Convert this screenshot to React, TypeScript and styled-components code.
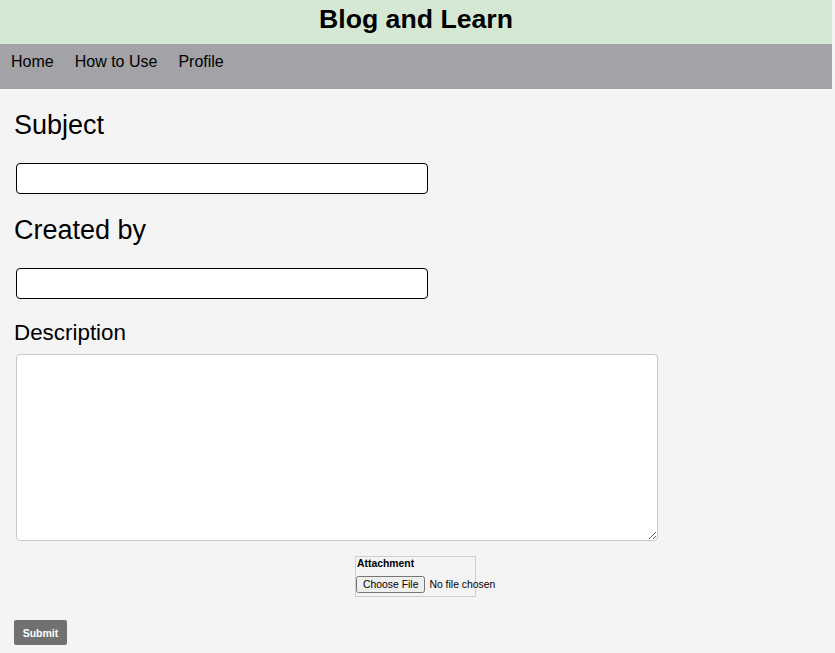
import React from "react";
import styled, { createGlobalStyle } from "styled-components";

const Global = createGlobalStyle`
  html, body {
    margin: 0;
    padding: 0;
    background: #f4f4f4;
    font-family: "Liberation Sans", Arial, sans-serif;
    color: #000;
  }
  * { box-sizing: border-box; }
`;

const Page = styled.div`
  width: 832px;
`;

const Header = styled.header`
  height: 44px;
  background: #d5e8d4;
  text-align: center;
`;

const Title = styled.h1`
  margin: 0;
  font-size: 26.67px;
  font-weight: bold;
  line-height: 38px;
`;

const Nav = styled.nav`
  height: 45px;
  background: #a3a2a6;
  display: flex;
  align-items: flex-start;
  gap: 21px;
  padding: 8px 0 0 11px;
`;

const NavLink = styled.a`
  font-size: 16px;
  line-height: 19px;
  color: #000;
  text-decoration: none;
  cursor: pointer;
`;

const Form = styled.form`
  display: flex;
  flex-direction: column;
  align-items: flex-start;
  padding: 20px 0 0 14px;
`;

const Label = styled.label<{ $size: number; $lh: number; $top?: number; $bottom: number }>`
  display: block;
  font-size: ${(p) => p.$size}px;
  line-height: ${(p) => p.$lh}px;
  margin: ${(p) => p.$top ?? 0}px 0 ${(p) => p.$bottom}px 0;
`;

const TextInput = styled.input`
  display: block;
  width: 412px;
  height: 31px;
  margin: 0 0 19px 2px;
  border: 1px solid #000;
  border-radius: 4px;
  background: #fff;
  font-family: "Liberation Sans", Arial, sans-serif;
  font-size: 14px;
  padding: 0 6px;
`;

const TextArea = styled.textarea`
  display: block;
  width: 642px;
  height: 187px;
  margin: 0 0 15px 2px;
  border: 1px solid #c8c8c8;
  border-radius: 4px;
  background: #fff;
  font-family: "Liberation Sans", Arial, sans-serif;
  font-size: 14px;
`;

const AttachRow = styled.div`
  width: 831px;
  display: flex;
  justify-content: center;
  margin-left: -14px;
`;

const AttachBox = styled.div`
  width: 121px;
  height: 41px;
  border: 1px solid #cfcfcf;
  padding: 1px 0 0 0;
  display: flex;
  flex-direction: column;
  gap: 6px;
  overflow: visible;
  font-size: 10.4px;
`;

const AttachLabel = styled.span`
  font-weight: bold;
  line-height: 12px;
  padding-left: 1px;
`;

const FileInput = styled.input`
  font-family: "Liberation Sans", Arial, sans-serif;
  font-size: 10.4px;
  white-space: nowrap;
  width: 170px;
  margin: 0;

  &::file-selector-button {
    font-family: "Liberation Sans", Arial, sans-serif;
    font-size: 10.4px;
    padding: 1px 5px;
    margin: 0 4px 0 0;
  }
`;

const SubmitButton = styled.button`
  margin-top: 23px;
  width: 53px;
  height: 25px;
  background: #717171;
  color: #fff;
  border: none;
  border-radius: 2px;
  font-family: "Liberation Sans", Arial, sans-serif;
  font-weight: bold;
  font-size: 10.5px;
  padding: 0;
  cursor: pointer;
`;

export default function App() {
  return (
    <Page>
      <Global />
      <Header>
        <Title>Blog and Learn</Title>
      </Header>
      <Nav>
        <NavLink>Home</NavLink>
        <NavLink>How to Use</NavLink>
        <NavLink>Profile</NavLink>
      </Nav>
      <Form onSubmit={(e) => e.preventDefault()}>
        <Label $size={27} $lh={32} $bottom={22}>Subject</Label>
        <TextInput type="text" />
        <Label $size={27} $lh={32} $top={1} $bottom={22}>Created by</Label>
        <TextInput type="text" />
        <Label $size={22.4} $lh={26} $top={2} $bottom={8}>Description</Label>
        <TextArea />
        <AttachRow>
          <AttachBox>
            <AttachLabel>Attachment</AttachLabel>
            <FileInput type="file" />
          </AttachBox>
        </AttachRow>
        <SubmitButton type="submit">Submit</SubmitButton>
      </Form>
    </Page>
  );
}
